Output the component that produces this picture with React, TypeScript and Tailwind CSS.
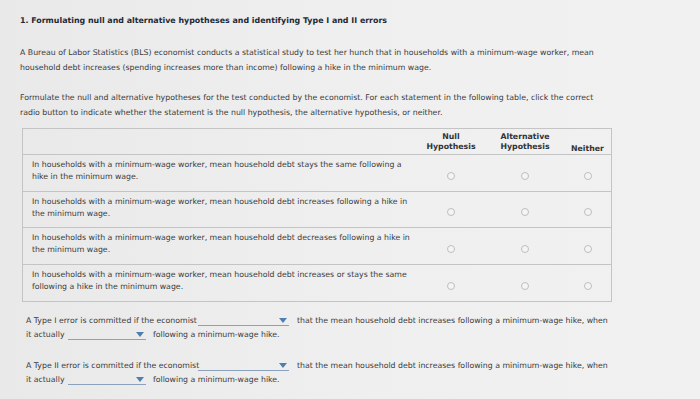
import React from "react";

const rows = [
  ["In households with a minimum-wage worker, mean household debt stays the same following a", "hike in the minimum wage."],
  ["In households with a minimum-wage worker, mean household debt increases following a hike in", "the minimum wage."],
  ["In households with a minimum-wage worker, mean household debt decreases following a hike in", "the minimum wage."],
  ["In households with a minimum-wage worker, mean household debt increases or stays the same", "following a hike in the minimum wage."],
];

function Radio() {
  return <span className="block h-[8px] w-[8px] rounded-full border border-[#bcbfc2] bg-[#f4f4f4]" />;
}

function Dropdown({ width }: { width: string }) {
  return (
    <span className={`inline-flex items-end justify-end border-b border-[#8aa2bb] h-[10px] ${width}`}>
      <svg width="8" height="5" viewBox="0 0 8 5" className="mb-[2px] mr-[2px]">
        <path d="M0 0 L8 0 L4 5 Z" fill="#4f7fb0" />
      </svg>
    </span>
  );
}

function ErrorBlock({ kind }: { kind: string }) {
  return (
    <div className="flex flex-col gap-[3px] pl-[26px]">
      <div className="flex items-end">
        <span className="w-[172px] whitespace-nowrap">A Type {kind} error is committed if the economist</span>
        <Dropdown width="w-[91px]" />
        <span className="ml-[8px] whitespace-nowrap">that the mean household debt increases following a minimum-wage hike, when</span>
      </div>
      <div className="flex items-end">
        <span className="w-[42px] whitespace-nowrap">it actually</span>
        <Dropdown width="w-[78px]" />
        <span className="ml-[7px] whitespace-nowrap">following a minimum-wage hike.</span>
      </div>
    </div>
  );
}

export default function App() {
  return (
    <div
      className="h-[399px] w-[700px] overflow-hidden bg-gradient-to-r from-[#e9e9e9] via-[#efefef] to-[#f1f1f1] text-[7.8px] leading-[11px] text-[#3a3a3a]"
      style={{ fontFamily: '"DejaVu Sans", Verdana, sans-serif' }}
    >
      <div className="pl-[20px] pt-[15px]">
        <h1 className="whitespace-nowrap text-[7.9px] font-bold text-[#1f2a36]">
          1. Formulating null and alternative hypotheses and identifying Type I and II errors
        </h1>
        <p className="mt-[18.5px] whitespace-nowrap leading-[15px]">
          A Bureau of Labor Statistics (BLS) economist conducts a statistical study to test her hunch that in households with a minimum-wage worker, mean
          <br />
          household debt increases (spending increases more than income) following a hike in the minimum wage.
        </p>
        <p className="mt-[15px] whitespace-nowrap leading-[15px]">
          Formulate the null and alternative hypotheses for the test conducted by the economist. For each statement in the following table, click the correct
          <br />
          radio button to indicate whether the statement is the null hypothesis, the alternative hypothesis, or neither.
        </p>
      </div>

      <div className="ml-[22px] mt-[8.5px] w-[590px] border border-[#c4c4c4]">
        <div className="flex h-[26px] border-b border-[#c4c4c4] font-bold leading-[9.5px] text-[#333]">
          <div className="w-[393px]" />
          <div className="flex w-[70px] items-end justify-center pb-[3px] text-center">
            Null
            <br />
            Hypothesis
          </div>
          <div className="flex w-[78px] items-end justify-center pb-[3px] text-center">
            Alternative
            <br />
            Hypothesis
          </div>
          <div className="flex flex-1 items-end justify-center pb-[1px]">Neither</div>
        </div>
        {rows.map((r, i) => (
          <div key={i} className={`flex h-[36.5px] ${i < rows.length - 1 ? "border-b border-[#c4c4c4]" : ""}`}>
            <div className="w-[393px] whitespace-nowrap pl-[9px] pt-[4px] leading-[12px]">
              {r[0]}
              <br />
              {r[1]}
            </div>
            <div className="flex w-[70px] items-center justify-center pt-[6px]">
              <Radio />
            </div>
            <div className="flex w-[78px] items-center justify-center pt-[6px]">
              <Radio />
            </div>
            <div className="flex flex-1 items-center justify-center pt-[6px]">
              <Radio />
            </div>
          </div>
        ))}
      </div>

      <div className="mt-[12.5px] flex flex-col gap-[20px]">
        <ErrorBlock kind="I" />
        <ErrorBlock kind="II" />
      </div>
    </div>
  );
}
